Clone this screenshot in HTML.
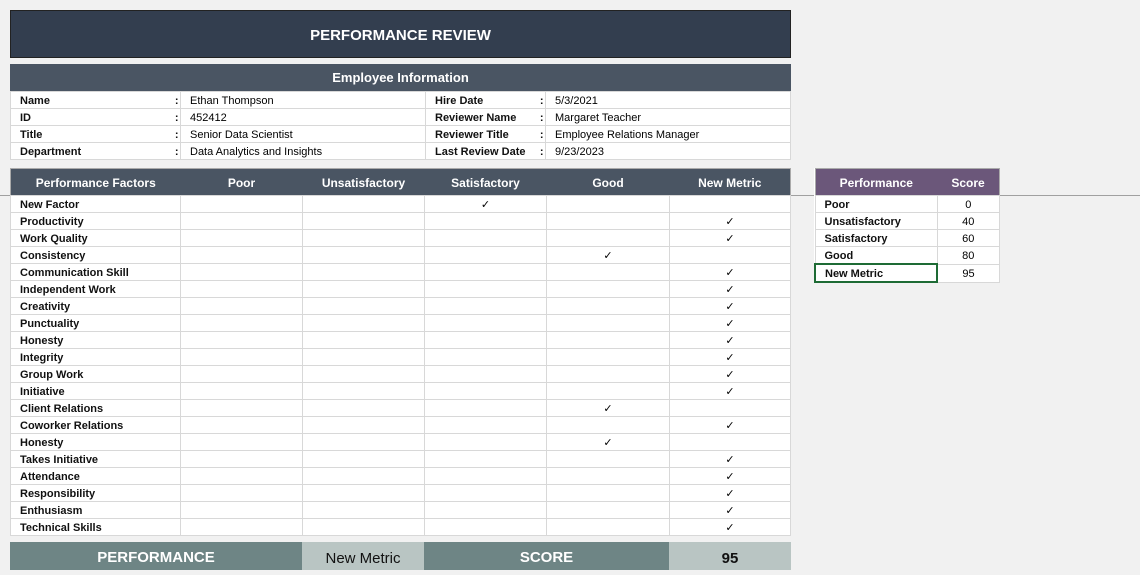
<!DOCTYPE html>
<html><head><meta charset="utf-8"><style>
*{margin:0;padding:0;box-sizing:border-box}
body{width:1140px;height:570px;background:#f1f1f1;font-family:"Liberation Sans",sans-serif;position:relative;overflow:hidden}
.a{position:absolute}
.title{left:10px;top:10px;width:781px;height:48px;background:#333e4f;border:1px solid #222;color:#fff;font-weight:bold;font-size:15px;text-align:center;line-height:50px}
.eh{left:10px;top:64px;width:781px;height:27px;background:#4a5563;color:#fff;font-weight:bold;font-size:13px;text-align:center;line-height:28px}
table{border-collapse:collapse;position:absolute;background:#fff;font-size:11px}
td{border:1px solid #d8d8d8;height:17px;padding:2px 0 0 9px;line-height:14px;white-space:nowrap;overflow:hidden;vertical-align:middle}
.b{font-weight:bold;color:#111}
.c{text-align:center;padding:2px 0 0 0}
th{background:#4a5563;color:#fff;font-size:12px;height:27px;font-weight:bold;padding-top:2px}
.line{height:1px;background:#a0a0a0}
</style></head><body>
<div class="a line" style="left:0;top:195px;width:1140px"></div>
<div class="a title">PERFORMANCE REVIEW</div>
<div class="a eh">Employee Information</div>
<table style="left:10px;top:91px;width:781px;border:1px solid #aaa">
<colgroup><col style="width:163px"><col style="width:7px"><col style="width:245px"><col style="width:113px"><col style="width:7px"><col></colgroup>
<tr><td class="b" style="border-right:0">Name</td><td class="c b" style="border-left:0">:</td><td>Ethan Thompson</td><td class="b" style="border-right:0">Hire Date</td><td class="c b" style="border-left:0;border-right:0">:</td><td>5/3/2021</td></tr>
<tr><td class="b" style="border-right:0">ID</td><td class="c b" style="border-left:0">:</td><td>452412</td><td class="b" style="border-right:0">Reviewer Name</td><td class="c b" style="border-left:0;border-right:0">:</td><td>Margaret Teacher</td></tr>
<tr><td class="b" style="border-right:0">Title</td><td class="c b" style="border-left:0">:</td><td>Senior Data Scientist</td><td class="b" style="border-right:0">Reviewer Title</td><td class="c b" style="border-left:0;border-right:0">:</td><td>Employee Relations Manager</td></tr>
<tr><td class="b" style="border-right:0">Department</td><td class="c b" style="border-left:0">:</td><td>Data Analytics and Insights</td><td class="b" style="border-right:0">Last Review Date</td><td class="c b" style="border-left:0;border-right:0">:</td><td>9/23/2023</td></tr>
</table>
<table style="left:10px;top:168px;width:781px;border:1px solid #aaa">
<colgroup><col style="width:170px"><col style="width:122px"><col style="width:122px"><col style="width:122px"><col style="width:123px"><col></colgroup>
<tr><th>Performance Factors</th><th>Poor</th><th>Unsatisfactory</th><th>Satisfactory</th><th>Good</th><th>New Metric</th></tr>
<tr><td class="b">New Factor</td><td></td><td></td><td class="c">✓</td><td></td><td></td></tr>
<tr><td class="b">Productivity</td><td></td><td></td><td></td><td></td><td class="c">✓</td></tr>
<tr><td class="b">Work Quality</td><td></td><td></td><td></td><td></td><td class="c">✓</td></tr>
<tr><td class="b">Consistency</td><td></td><td></td><td></td><td class="c">✓</td><td></td></tr>
<tr><td class="b">Communication Skill</td><td></td><td></td><td></td><td></td><td class="c">✓</td></tr>
<tr><td class="b">Independent Work</td><td></td><td></td><td></td><td></td><td class="c">✓</td></tr>
<tr><td class="b">Creativity</td><td></td><td></td><td></td><td></td><td class="c">✓</td></tr>
<tr><td class="b">Punctuality</td><td></td><td></td><td></td><td></td><td class="c">✓</td></tr>
<tr><td class="b">Honesty</td><td></td><td></td><td></td><td></td><td class="c">✓</td></tr>
<tr><td class="b">Integrity</td><td></td><td></td><td></td><td></td><td class="c">✓</td></tr>
<tr><td class="b">Group Work</td><td></td><td></td><td></td><td></td><td class="c">✓</td></tr>
<tr><td class="b">Initiative</td><td></td><td></td><td></td><td></td><td class="c">✓</td></tr>
<tr><td class="b">Client Relations</td><td></td><td></td><td></td><td class="c">✓</td><td></td></tr>
<tr><td class="b">Coworker Relations</td><td></td><td></td><td></td><td></td><td class="c">✓</td></tr>
<tr><td class="b">Honesty</td><td></td><td></td><td></td><td class="c">✓</td><td></td></tr>
<tr><td class="b">Takes Initiative</td><td></td><td></td><td></td><td></td><td class="c">✓</td></tr>
<tr><td class="b">Attendance</td><td></td><td></td><td></td><td></td><td class="c">✓</td></tr>
<tr><td class="b">Responsibility</td><td></td><td></td><td></td><td></td><td class="c">✓</td></tr>
<tr><td class="b">Enthusiasm</td><td></td><td></td><td></td><td></td><td class="c">✓</td></tr>
<tr><td class="b">Technical Skills</td><td></td><td></td><td></td><td></td><td class="c">✓</td></tr>
</table>
<table style="left:814px;top:168px;width:186px;border:1px solid #aaa">
<colgroup><col style="width:122px"><col></colgroup>
<tr><th style="background:#6b577a">Performance</th><th style="background:#6b577a">Score</th></tr>
<tr><td class="b">Poor</td><td class="c">0</td></tr>
<tr><td class="b">Unsatisfactory</td><td class="c">40</td></tr>
<tr><td class="b">Satisfactory</td><td class="c">60</td></tr>
<tr><td class="b">Good</td><td class="c">80</td></tr>
<tr><td class="b" style="border:2px solid #1e6b35">New Metric</td><td class="c">95</td></tr>
</table>
<div class="a" style="left:10px;top:542px;width:292px;height:28px;background:#6e8585;color:#fff;font-weight:bold;font-size:15px;text-align:center;line-height:32px">PERFORMANCE</div>
<div class="a" style="left:302px;top:542px;width:122px;height:28px;background:#b9c5c3;color:#111;font-size:15px;text-align:center;line-height:33px">New Metric</div>
<div class="a" style="left:424px;top:542px;width:245px;height:28px;background:#6e8585;color:#fff;font-weight:bold;font-size:15px;text-align:center;line-height:32px">SCORE</div>
<div class="a" style="left:669px;top:542px;width:122px;height:28px;background:#b9c5c3;color:#111;font-weight:bold;font-size:15px;text-align:center;line-height:33px">95</div>
</body></html>
